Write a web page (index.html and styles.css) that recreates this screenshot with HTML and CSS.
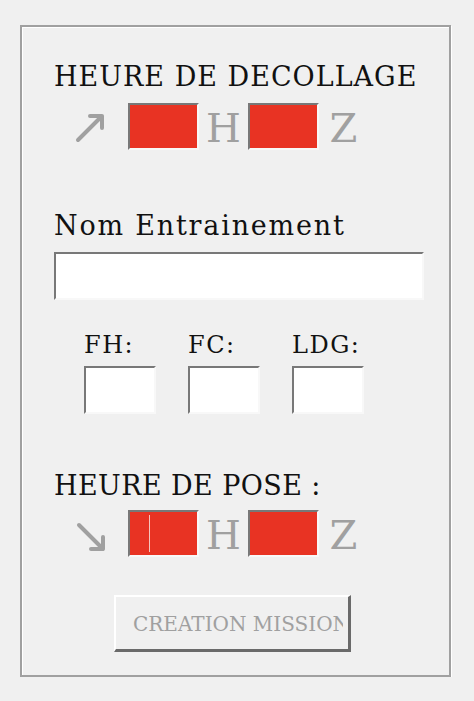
FILE: index.html
```html
<!DOCTYPE html>
<html>
<head>
<meta charset="utf-8">
<link rel="stylesheet" href="styles.css">
</head>
<body>
<fieldset class="panel">
  <div class="title">HEURE DE DECOLLAGE</div>
  <div class="time-row">
    <svg class="arrow" width="32" height="32" viewBox="0 0 32 32"><path d="M3 29 L27 5 M15 5 H27 V17" fill="none" stroke="#a0a0a0" stroke-width="4" stroke-linecap="round" stroke-linejoin="round"/></svg>
    <span class="box red"></span>
    <span class="unit">H</span>
    <span class="box red"></span>
    <span class="unit">Z</span>
  </div>
  <div class="label name-label">Nom Entrainement</div>
  <div class="box wide"></div>
  <div class="counts">
    <div class="count"><div class="small">FH:</div><div class="box sq"></div></div>
    <div class="count"><div class="small">FC:</div><div class="box sq"></div></div>
    <div class="count"><div class="small">LDG:</div><div class="box sq"></div></div>
  </div>
  <div class="title pose">HEURE DE POSE :</div>
  <div class="time-row">
    <svg class="arrow down" width="32" height="32" viewBox="0 0 32 32"><path d="M4 4 L28 28 M28 16 V28 H16" fill="none" stroke="#a0a0a0" stroke-width="4" stroke-linecap="round" stroke-linejoin="round"/></svg>
    <span class="box red"><i class="cursor"></i></span>
    <span class="unit">H</span>
    <span class="box red"></span>
    <span class="unit">Z</span>
  </div>
  <div class="btn-row"><div class="btn"><span>CREATION MISSION</span></div></div>
</fieldset>
</body>
</html>
```
FILE: styles.css
```css
html, body {
  margin: 0;
  padding: 0;
  background: #f0f0f0;
}
body {
  padding: 25px 0 0 20px;
  font-family: "DejaVu Serif", serif;
}
.panel {
  box-sizing: border-box;
  width: 431px;
  height: 652px;
  margin: 0;
  padding: 0 0 0 32px;
  border: 2px solid #a0a0a0;
  box-shadow: inset 1px 1px 0 #ffffff, 1px 1px 0 #ffffff;
  display: flex;
  flex-direction: column;
}
.title {
  margin-top: 34px;
  font-size: 27px;
  line-height: 32px;
  color: #111;
  letter-spacing: 1px;
  white-space: nowrap;
}
.pose {
  margin-top: 56px;
  letter-spacing: 0.4px;
}
.time-row {
  display: flex;
  align-items: center;
  margin-top: 10px;
  height: 47px;
}
.pose + .time-row { margin-top: 8px; }
.arrow {
  margin-left: 21px;
  margin-right: 21px;
  flex: none;
}
.arrow.down { margin-top: 6px; }
.box {
  box-sizing: border-box;
  border-style: solid;
  border-width: 2px;
  border-color: #787878 #f8f8f8 #f8f8f8 #787878;
  background: #fff;
  position: relative;
}
.red {
  width: 71px;
  height: 47px;
  background: #e83323;
  flex: none;
}
.unit {
  width: 49px;
  text-align: center;
  font-size: 40px;
  color: #a0a0a0;
  line-height: 47px;
  align-self: flex-start;
  margin-top: 2px;
}
.cursor {
  position: absolute;
  left: 19px;
  top: 3px;
  width: 1px;
  height: 37px;
  background: #f6c4bc;
}
.name-label {
  margin-top: 61px;
  font-size: 27px;
  line-height: 30px;
  letter-spacing: 1.8px;
  color: #111;
  white-space: nowrap;
}
.wide {
  width: 370px;
  height: 48px;
  margin-top: 11px;
}
.counts {
  display: flex;
  margin-top: 32px;
  margin-left: 30px;
  gap: 32px;
}
.count { width: 72px; }
.small {
  font-size: 24px;
  line-height: 26px;
  letter-spacing: 1.5px;
  color: #111;
  white-space: nowrap;
}
.sq {
  width: 72px;
  height: 48px;
  margin-top: 8px;
}
.btn-row {
  margin-top: 38px;
  padding-left: 60px;
}
.btn {
  box-sizing: border-box;
  width: 237px;
  height: 57px;
  border-style: solid;
  border-width: 2px 3px 3px 2px;
  border-color: #ffffff #6a6a6a #6a6a6a #ffffff;
  background: #f0f0f0;
  overflow: hidden;
  white-space: nowrap;
  padding-left: 17px;
  font-size: 20px;
  line-height: 54px;
  color: #a0a0a0;
}
.btn span {
  display: inline-block;
  width: 210px;
  overflow: hidden;
  vertical-align: top;
}
```
